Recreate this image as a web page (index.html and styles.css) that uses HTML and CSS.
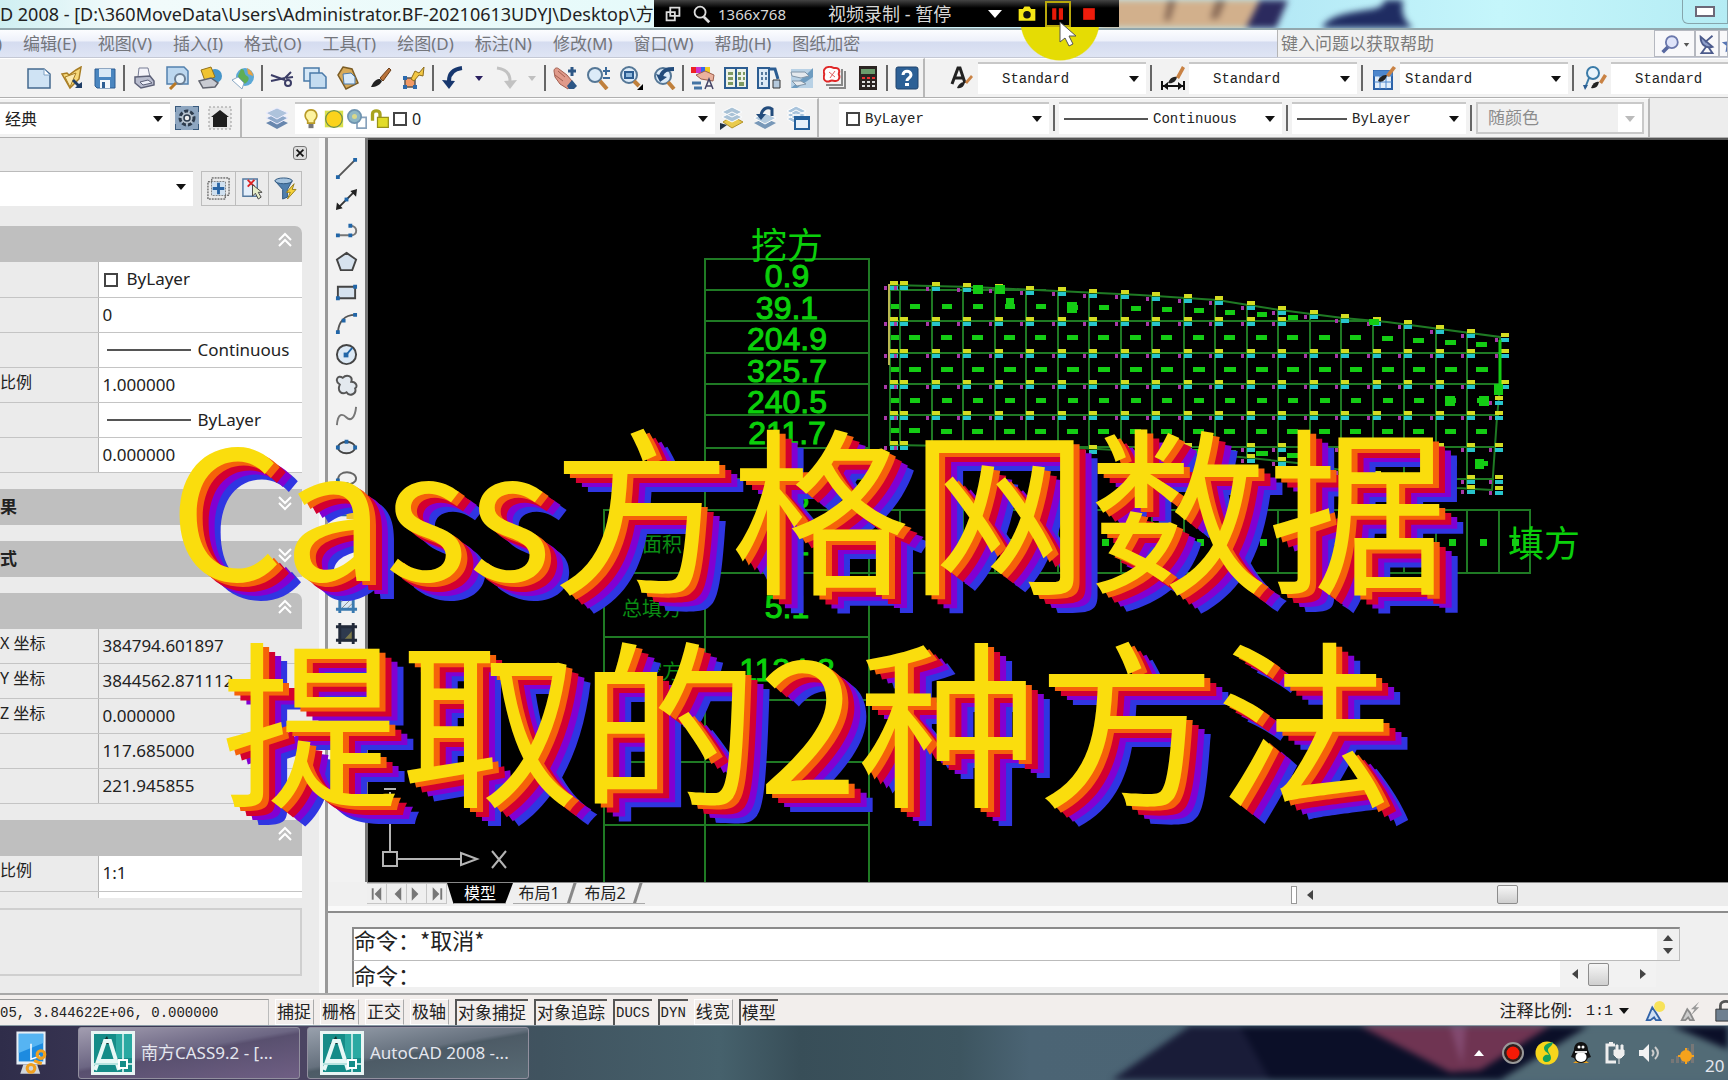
FILE: index.html
```html
<!DOCTYPE html>
<html lang="zh-CN">
<head>
    <meta charset="UTF-8">
    <meta name="viewport" content="width=device-width, initial-scale=1.0">
    <title>Cass方格网数据提取的2种方法</title>
    <link rel="stylesheet" href="styles.css">
</head>
<body>
    <header class="titlebar">
        <svg class="wall" viewBox="0 0 1728 30" preserveAspectRatio="none">
            <path d="M1100 0h160l-8 30h-152z" fill="#d2b08c"/>
            <path d="M1168 0h8l-6 22h-6zM1216 0h10l-8 20h-8z" fill="#8a6c58"/>
            <path d="M1260 0h28l-12 30h-30z" fill="#2b2a5e"/>
            <path d="M1322 30c6-14 30-17 50-20 10-2 12-6 13-10h18c-2 12 0 22 10 30z" fill="#1f2c62"/>
        </svg>
        <span class="title-text">D 2008 - [D:\360MoveData\Users\Administrator.BF-20210613UDYJ\Desktop\方格</span>
        <button class="minimize" aria-label="最小化"></button>
    </header>

    <!-- floating screen recorder -->
    <div class="recorder">
        <svg class="icon" viewBox="0 0 24 24" fill="none" stroke="#ddd" stroke-width="2"><path d="M9 5h10v9H9zM5 10h9v9H5z"/></svg>
        <svg class="icon" viewBox="0 0 24 24" fill="none" stroke="#ddd" stroke-width="2"><circle cx="11" cy="10" r="6"/><path d="M15 15l6 6" stroke-width="3"/></svg>
        <span class="rec-size">1366x768</span>
        <span class="rec-state">视频录制 - 暂停</span>
        <span class="rec-arrow"></span>
        <button class="rec-btn" aria-label="截图"><svg viewBox="0 0 24 24"><path d="M2 6h5l2-3h6l2 3h5v14H2z" fill="#f5e616"/><circle cx="12" cy="13" r="4.500" fill="#111"/></svg></button>
        <button class="rec-btn rec-pause" aria-label="暂停"><svg viewBox="0 0 24 24"><path d="M5 5h5v14H5zM13 5h5v14h-5z" fill="#e81a08"/></svg></button>
        <button class="rec-btn" aria-label="停止"><svg viewBox="0 0 24 24"><path d="M5 5h14v14H5z" fill="#ee1c0c"/></svg></button>
    </div>
    <div class="click-spot"></div>
    <svg class="cursor" viewBox="0 0 20 28"><path d="M2 2v20l5-4 4 8 4-2-4-8h7z" fill="#fff" stroke="#555" stroke-width="1"/></svg>

    <nav class="menubar">
        <a href="#">)</a>
        <a href="#">编辑(E)</a>
        <a href="#">视图(V)</a>
        <a href="#">插入(I)</a>
        <a href="#">格式(O)</a>
        <a href="#">工具(T)</a>
        <a href="#">绘图(D)</a>
        <a href="#">标注(N)</a>
        <a href="#">修改(M)</a>
        <a href="#">窗口(W)</a>
        <a href="#">帮助(H)</a>
        <a href="#">图纸加密</a>
        <div class="help">
            <input type="text" aria-label="帮助搜索" placeholder="键入问题以获取帮助">
            <button class="help-btn wide" aria-label="搜索"><svg viewBox="0 0 34 24"><path d="M4 21l6-6" stroke="#5868a0" stroke-width="4"/><circle cx="14" cy="10" r="6.500" fill="#dfe4fa" stroke="#6b78ac" stroke-width="2"/><path d="M27 11h6l-3 4z" fill="#555"/></svg></button>
            <button class="help-btn" aria-label="通讯中心"><svg viewBox="0 0 24 24"><path d="M5 4c0 9 6 13 13 11z" fill="#8fa0cc" stroke="#4c5b8c" stroke-width="2"/><path d="M10 10l8-7M11 15l-5 7h12l-4-6" fill="none" stroke="#4c5b8c" stroke-width="2"/></svg></button>
            <button class="help-btn last" aria-label="收藏"><svg viewBox="0 0 24 24"><path d="M12 3l3 6 7 1-5 4 1 7-6-3-6 3 1-7-5-4 7-1z" fill="#5876b4"/></svg></button>
        </div>
    </nav>

    <div class="toolbar">
        <div class="group standard">
            <button class="tool" aria-label="新建"><svg viewBox="0 0 24 24"><path d="M1 3h16l6 5v14H1z" fill="#cfe3f4" stroke="#44698f" stroke-width="1.500"/><path d="M17 3v6h6z" fill="#fff" stroke="#7fa2c4"/></svg></button>
            <button class="tool" aria-label="打开"><svg viewBox="0 0 24 24"><path d="M2 8l5-1 2 2 7-5 5-3-2 12-9 9z" fill="#f6d878" stroke="#a87d24" stroke-width="1.500"/><path d="M5 11l11-4-6 14z" fill="#fbeab0" stroke="#a87d24"/><path d="M22 22h-7l2-2-5-5 2-2 5 5 3-2z" fill="#1f3d66"/></svg></button>
            <button class="tool" aria-label="保存"><svg viewBox="0 0 24 24"><path d="M2 3h20v19H4l-2-2z" fill="#4a86c0" stroke="#2c5d92"/><path d="M6 3h12v8H6z" fill="#d8e8f6"/><path d="M7 14h10v8H7z" fill="#f2f6fa"/><path d="M9 16h3v6H9z" fill="#2c5d92"/></svg></button>
            <span class="sep"></span>
            <button class="tool" aria-label="打印"><svg viewBox="0 0 24 24"><path d="M7 2h9l2 9H6z" fill="#f4f4fa" stroke="#777c94"/><path d="M3 11l15-1 4 5v4l-13 3-6-5z" fill="#b9bdcf" stroke="#5d6178" stroke-width="1.500"/><path d="M8 16l8-2 4 3-9 2z" fill="#eef0fa" stroke="#5d6178"/></svg></button>
            <button class="tool" aria-label="打印预览"><svg viewBox="0 0 24 24"><path d="M2 1h17l4 4v13H2z" fill="#bcd7ef" stroke="#5381ae" stroke-width="1.500"/><circle cx="15" cy="13" r="5" fill="#e4f0fa" stroke="#6a7e94" stroke-width="2"/><path d="M11 17l-6 6" stroke="#b97824" stroke-width="3"/></svg></button>
            <button class="tool" aria-label="发布"><svg viewBox="0 0 24 24"><circle cx="17" cy="10" r="7" fill="#4695c8"/><path d="M3 4l10-3 4 10-10 4z" fill="#f0c330" stroke="#94721a"/><path d="M1 15l12-3 7 5-3 4-12 1z" fill="#c9cbd2" stroke="#60636e" stroke-width="1.500"/></svg></button>
            <button class="tool" aria-label="三维 DWF"><svg viewBox="0 0 24 24"><circle cx="14" cy="11" r="9" fill="#5ba8d6"/><path d="M10 3c5 0 2 5 6 7s0 8-4 8-4-4-5-8z" fill="#5fae55"/><path d="M16 2c4 2 6 5 6 8l-5-2z" fill="#e9a344"/><path d="M1 14l6-3 6 6-2 6z" fill="#fff" stroke="#8aa8c4"/></svg></button>
            <span class="sep"></span>
            <button class="tool" aria-label="剪切"><svg viewBox="0 0 24 24" fill="none" stroke="#3b3d66" stroke-width="2"><path d="M1 9l14 5M1 15l14-3"/><circle cx="18" cy="17" r="3"/><path d="M15 12l6-6M16 12l7-1"/></svg></button>
            <button class="tool" aria-label="复制"><svg viewBox="0 0 24 24"><path d="M1 2h15v13H1z" fill="#d6e8f7" stroke="#4a79a8" stroke-width="1.500"/><path d="M7 7h12l4 4v11H7z" fill="#c4dcf0" stroke="#4a79a8" stroke-width="1.500"/></svg></button>
            <button class="tool" aria-label="粘贴"><svg viewBox="0 0 24 24"><path d="M7 1l9 2 6 14-12 6-8-14z" fill="#d8aa58" stroke="#7c5d26" stroke-width="1.500"/><path d="M7 8l8-1 4 4v7H8z" fill="#d8eafa" stroke="#4a79a8"/></svg></button>
            <button class="tool" aria-label="特性匹配"><svg viewBox="0 0 24 24"><path d="M2 21c3-7 6-8 9-8l2 2c-2 4-6 6-11 6z" fill="#222"/><path d="M11 12l9-10 2 2-8 11z" fill="#b9733a" stroke="#6a3e1a"/></svg></button>
            <button class="tool" aria-label="块编辑器"><svg viewBox="0 0 24 24"><path d="M3 12h10v9H3z" fill="#f29a66" stroke="#555" stroke-width="1.500"/><path d="M1 10h4v4H1zM1 19h4v4H1zM11 19h4v4h-4z" fill="#2d6aad"/><path d="M9 13l4-8 4 2 5-6-1 9-4-1-5 6z" fill="#f2c744" stroke="#8d6c19"/></svg></button>
            <span class="sep"></span>
            <button class="tool" aria-label="放弃"><svg viewBox="0 0 24 24"><path d="M8 15C8 7 13 3 21 2" fill="none" stroke="#17376e" stroke-width="4"/><path d="M1 14l13 1-6 8z" fill="#17376e"/></svg></button>
            <button class="drop" aria-label="放弃列表"></button>
            <button class="tool" aria-label="重做"><svg viewBox="0 0 24 24"><path d="M16 15C16 7 11 3 3 2" fill="none" stroke="#c2c2c2" stroke-width="3"/><path d="M10 15l13-1-7 9z" fill="#c2c2c2"/></svg></button>
            <button class="drop off" aria-label="重做列表"></button>
            <span class="sep"></span>
            <button class="tool" aria-label="实时平移"><svg viewBox="0 0 24 24"><path d="M1 5c0-3 3-4 5-2l8 6 5 6-4 8-8-5-5-7z" fill="#e09a8a" stroke="#a35f50"/><path d="M5 5l7 6M2 9l8 6" stroke="#a35f50"/><path d="M19 1v9M15 5h8" stroke="#2c5685" stroke-width="3"/><path d="M14 20l5-6 5 6-3 3h-5z" fill="#2c5685"/></svg></button>
            <button class="tool" aria-label="实时缩放"><svg viewBox="0 0 24 24"><circle cx="9" cy="9" r="7" fill="#dcebf8" stroke="#557796" stroke-width="2"/><path d="M14 15l7 8" stroke="#c0803c" stroke-width="4"/><path d="M17 5h7M20 1v8M17 12h7" stroke="#3b6a9a" stroke-width="2"/></svg></button>
            <button class="tool" aria-label="窗口缩放"><svg viewBox="0 0 24 24"><circle cx="10" cy="9" r="8" fill="#dcebf8" stroke="#557796" stroke-width="2"/><path d="M6 6h8v6H6z" fill="#8fb8dc" stroke="#2c5d92" stroke-width="2"/><path d="M15 15l5 5" stroke="#c0803c" stroke-width="4"/><path d="M24 18v6h-6z" fill="#000"/></svg></button>
            <button class="tool" aria-label="缩放上一个"><svg viewBox="0 0 24 24"><circle cx="11" cy="10" r="8" fill="#dcebf8" stroke="#557796" stroke-width="2"/><path d="M16 16l6 7" stroke="#c0803c" stroke-width="4"/><path d="M9 10c2-6 6-7 13-7" fill="none" stroke="#234c7c" stroke-width="4"/><path d="M4 8l11 3-7 5z" fill="#234c7c"/></svg></button>
            <span class="sep"></span>
            <button class="tool" aria-label="特性"><svg viewBox="0 0 24 24"><path d="M0 1h5v6H0z" fill="#e22"/><path d="M5 1h5v6H5z" fill="#c3c"/><path d="M10 1h4v6h-4z" fill="#36e"/><path d="M14 1h5v6h-5z" fill="#ec2"/><path d="M5 9l9-4 9 4-1 6-12-2z" fill="#eab29e" stroke="#9b5f4d"/><path d="M1 17h9M3 22h8" stroke="#4474a4" stroke-width="3"/><path d="M14 23l4-10 4 10M15 20h6" fill="none" stroke="#446" stroke-width="1.500"/></svg></button>
            <button class="tool" aria-label="设计中心"><svg viewBox="0 0 24 24"><path d="M1 2h22v20H1z" fill="#eef3e8" stroke="#2c5d92" stroke-width="2"/><path d="M12 2v20" stroke="#2c5d92" stroke-width="2"/><path d="M4 6h5v3H4zM4 11h5v3H4zM4 16h5v3H4zM14 6h3v3h-3zM19 6h2v3h-2zM14 11h3v3h-3zM19 11h2v3h-2zM15 16h5v4h-5z" fill="#7f9a62"/></svg></button>
            <button class="tool" aria-label="工具选项板"><svg viewBox="0 0 24 24"><path d="M1 2h11v20H1z" fill="#dbe9f6" stroke="#2c5d92" stroke-width="2"/><path d="M4 6h2v3H4zM8 6h2v3H8zM4 11h2v3H4zM8 11h2v3H8zM4 16h2v3H4z" fill="#54789c"/><path d="M12 3h6l3 10" fill="none" stroke="#2c5d92" stroke-width="3"/><path d="M16 14h7v8h-7z" fill="#b5c9dc" stroke="#333"/></svg></button>
            <button class="tool" aria-label="图纸集"><svg viewBox="0 0 24 24"><path d="M1 3h22v19H1z" fill="#b8d1e5"/><path d="M23 2v9L7 22H1l14-12z" fill="#6e9cc0"/><path d="M1 6h14l4 4-8 2-9-2zM2 15h9l5 3-9 2z" fill="#e4e9ee" stroke="#8296a8"/></svg></button>
            <button class="tool" aria-label="标记集"><svg viewBox="0 0 24 24"><path d="M22 5v17H6M19 3v16H3" fill="none" stroke="#888" stroke-width="2"/><path d="M5 1c4-1 4 1 6 1s4-1 5 2-1 3 0 5 0 6-3 6-4-1-6 0-5 1-6-2 1-4 0-6 1-6 4-6z" fill="#fff" stroke="#e02828" stroke-width="2"/><path d="M6 6l6 5M12 5l-5 7" stroke="#e06060" stroke-width="1"/></svg></button>
            <button class="tool" aria-label="计算器"><svg viewBox="0 0 24 24"><path d="M3 0h18v24H3z" fill="#2b2422"/><path d="M5 3h14v5H5z" fill="#6b9d6d"/><path d="M6 11h3v2H6zM11 11h3v2h-3zM16 11h3v2h-3z" fill="#e33"/><path d="M6 15h3v2H6zM11 15h3v2h-3zM16 15h3v2h-3zM6 19h3v2H6zM11 19h3v2h-3zM16 19h3v2h-3z" fill="#ddd"/></svg></button>
            <span class="sep"></span>
            <button class="tool" aria-label="帮助"><svg viewBox="0 0 24 24"><rect x="1" y="1" width="22" height="22" rx="2" fill="#2c6096" stroke="#1e436c"/><path d="M8 9c0-5 8-5 8 0 0 3-4 3-4 6" fill="none" stroke="#fff" stroke-width="3"/><path d="M10 17h4v3h-4z" fill="#fff"/></svg></button>
        </div>
        <div class="group styles">
            <button class="tool" aria-label="文字样式"><svg viewBox="0 0 24 24"><path d="M2 18L8 2h2l5 15M5 12h8" fill="none" stroke="#222" stroke-width="3"/><path d="M7 22c2-5 5-6 8-6-1 5-4 7-8 6z" fill="#222"/><path d="M15 16l6-7 2 2-6 7z" fill="#c98244"/></svg></button>
            <span class="combo"><select class="mono indent" aria-label="文字样式"><option>Standard</option></select></span>
            <span class="sep"></span>
            <button class="tool" aria-label="标注样式"><svg viewBox="0 0 24 24"><path d="M1 15v9M23 15v9M2 20h20" stroke="#111" stroke-width="2"/><path d="M2 20l5-4v8zM22 20l-5-4v8z" fill="#111"/><path d="M7 17c2-5 5-7 9-6-1 5-5 7-9 6z" fill="#222"/><path d="M15 11l6-11 3 2-6 11z" fill="#c98244"/></svg></button>
            <span class="combo"><select class="mono indent" aria-label="标注样式"><option>Standard</option></select></span>
            <span class="sep"></span>
            <button class="tool" aria-label="表格样式"><svg viewBox="0 0 24 24"><path d="M2 5h18v18H2z" fill="#e2eefa" stroke="#2c62a8" stroke-width="2"/><path d="M2 5h18v5H2zM2 16h18M8 5v18M14 5v18" fill="#4d86cc" stroke="#4d86cc"/><path d="M6 15c2-5 5-6 9-6-1 5-5 8-9 6z" fill="#222"/><path d="M14 9l7-9 3 2-7 9z" fill="#c98244"/></svg></button>
            <span class="combo"><select class="mono" aria-label="表格样式"><option>Standard</option></select></span>
            <span class="sep"></span>
            <button class="tool" aria-label="多重引线样式"><svg viewBox="0 0 24 24"><circle cx="10" cy="7" r="6" fill="#eaf4fb" stroke="#3b7ba8" stroke-width="2"/><path d="M6 12l-4 10" stroke="#3b7ba8" stroke-width="2"/><path d="M0 19h5l-3 5z" fill="#2c5d92"/><path d="M8 22c2-5 5-7 8-6-1 5-4 7-8 6z" fill="#222"/><path d="M16 16l5-8 3 2-5 8z" fill="#c98244"/></svg></button>
            <span class="combo grow"><select class="mono indent" aria-label="多重引线样式"><option>Standard</option></select></span>
        </div>
    </div>

    <div class="toolbar">
        <div class="group workspace">
            <span class="combo"><select aria-label="工作空间"><option>经典</option></select></span>
            <button class="tool" aria-label="工作空间设置"><svg viewBox="0 0 24 24"><path d="M0 0h24v24H0z" fill="#8ea6c0"/><path d="M0 6V0h6M18 0h6v6M24 18v6h-6M6 24H0v-6" fill="none" stroke="#38597c" stroke-width="2"/><circle cx="12" cy="12" r="7" fill="#bac5d0" stroke="#2d3b4c" stroke-width="3" stroke-dasharray="4 2"/><circle cx="12" cy="12" r="3" fill="#eee" stroke="#2d3b4c" stroke-width="1.500"/></svg></button>
            <button class="tool" aria-label="我的工作空间"><svg viewBox="0 0 24 24"><path d="M1 1h22v22H1z" fill="#e8e8e8" stroke="#999" stroke-dasharray="2 2"/><path d="M12 4l9 7h-2v10H5V11H3z" fill="#1e1e1e"/></svg></button>
        </div>
        <div class="group layers">
            <button class="tool" aria-label="图层特性"><svg viewBox="0 0 24 24"><path d="M12 12l11 5-11 6-11-6z" fill="#6887ae"/><path d="M12 7l11 5-11 6-11-6z" fill="#8ea9ca" stroke="#eef"/><path d="M12 2l11 5-11 6L1 7z" fill="#aec3dc" stroke="#eef"/></svg></button>
            <span class="combo">
                <svg class="icon" viewBox="0 0 24 24"><path d="M8 14C2 8 6 1 12 1s10 7 4 13v3H8z" fill="#fdf3a0" stroke="#b99b28" stroke-width="2"/><path d="M9 18h6v5H9z" fill="#777"/></svg>
                <svg class="icon" viewBox="0 0 24 24"><path d="M1 2h22v20H1z" fill="#d9e04a"/><circle cx="12" cy="12" r="10" fill="#fbd31c" stroke="#6b8e4e" stroke-width="1.500"/></svg>
                <svg class="icon" viewBox="0 0 24 24"><path d="M12 10h11v13H12z" fill="#fff" stroke="#88a2bc" stroke-width="2"/><circle cx="9" cy="9" r="8" fill="#8eb6c4" stroke="#6f94b0" stroke-width="2"/><circle cx="9" cy="9" r="3" fill="#d9d88a"/></svg>
                <svg class="icon" viewBox="0 0 24 24"><path d="M3 14V6c0-5 9-5 9 0v4" fill="none" stroke="#a8a31e" stroke-width="4"/><path d="M9 10h13v12H9z" fill="#e2dc28" stroke="#98921a" stroke-width="1.500"/></svg>
                <span class="swatch"></span>
                <select aria-label="图层"><option>0</option></select>
            </span>
            <button class="tool" aria-label="置为当前"><svg viewBox="0 0 24 24"><path d="M12 10l11 6-11 6-9-6z" fill="#e9ca4c" stroke="#b3932a"/><path d="M12 6l10 5-10 5-10-5zM12 1l10 5-10 5L2 6z" fill="#a9c2d6" stroke="#fff"/><path d="M0 24v-7l7 2z" fill="#234"/></svg></button>
            <button class="tool" aria-label="上一个图层"><svg viewBox="0 0 24 24"><path d="M12 12l11 5-11 6-11-6z" fill="#7898b8"/><path d="M12 7l11 5-11 6L1 12z" fill="#b4cbdf" stroke="#fff"/><path d="M8 9c1-6 6-9 11-6v7" fill="none" stroke="#234c7c" stroke-width="3"/><path d="M3 8h10l-5 6z" fill="#234c7c"/></svg></button>
            <button class="tool" aria-label="图层状态"><svg viewBox="0 0 24 24"><path d="M10 8l10 5-10 5-9-5zM10 4l10 5-10 5-9-5zM10 0l10 5-10 5-9-5z" fill="#a9c4dc" stroke="#fff"/><path d="M9 11h14v12H9z" fill="#e6f1fb" stroke="#24609c" stroke-width="2"/><path d="M9 11h14v3H9z" fill="#24609c"/></svg></button>
        </div>
        <div class="group properties">
            <span class="combo color"><span class="swatch"></span><select class="mono" aria-label="颜色"><option>ByLayer</option></select></span>
            <span class="sep"></span>
            <span class="combo ltype"><span class="rule"></span><select class="mono" aria-label="线型"><option>Continuous</option></select></span>
            <span class="sep"></span>
            <span class="combo weight"><span class="rule"></span><select class="mono" aria-label="线宽"><option>ByLayer</option></select></span>
            <span class="sep"></span>
            <span class="combo disabled"><select aria-label="打印样式" disabled><option>随颜色</option></select></span>
        </div>
    </div>

    <main class="work">
        <aside class="palette">
            <button class="close" aria-label="关闭"><svg viewBox="0 0 14 14"><path d="M3 3l8 8M11 3l-8 8" stroke="#111" stroke-width="2"/></svg></button>
            <div class="picker">
                <span class="combo"><select aria-label="选择对象"><option></option></select></span>
                <div class="pick-btns">
                    <button aria-label="切换 PICKADD"><svg viewBox="0 0 24 24"><path d="M5 1h18v18H5zM1 5h18v18H1z" fill="none" stroke="#333" stroke-dasharray="2 1"/><path d="M5 5h14v14H5z" fill="#cfe0f0"/><path d="M12 6v12M6 12h12" stroke="#2a65a4" stroke-width="3"/></svg></button>
                    <button aria-label="选择对象"><svg viewBox="0 0 24 24"><path d="M2 2h15v18H2z" fill="#e3eefa" stroke="#557aa0" stroke-width="1.500"/><path d="M7 3l7 7M14 3l-7 7" stroke="#d22" stroke-width="2"/><path d="M12 8v12l3-3 3 6 3-2-3-5h4z" fill="#e4ecc8" stroke="#444"/></svg></button>
                    <button aria-label="快速选择"><svg viewBox="0 0 24 24"><path d="M1 4l8 9v10l5-2v-8l5-9z" fill="#4f7fae" stroke="#2f5880"/><ellipse cx="10" cy="4" rx="9" ry="3" fill="#a5c3de" stroke="#2f5880"/><path d="M21 7l-8 9h4l-3 7 9-10h-4z" fill="#f6d23a" stroke="#9b7f18"/></svg></button>
                </div>
            </div>

            <section>
                <h2><svg viewBox="0 0 14 16"><path d="M1 8l6-6 6 6M1 14l6-6 6 6"/></svg></h2>
                <table>
                    <tr><th></th><td><span class="swatch"></span>ByLayer</td></tr>
                    <tr><th></th><td>0</td></tr>
                    <tr><th></th><td><span class="rule"></span>Continuous</td></tr>
                    <tr><th>比例</th><td>1.000000</td></tr>
                    <tr><th></th><td><span class="rule"></span>ByLayer</td></tr>
                    <tr><th></th><td>0.000000</td></tr>
                </table>
            </section>
            <section>
                <h2 class="flat">果<svg viewBox="0 0 14 16"><path d="M1 2l6 6 6-6M1 8l6 6 6-6"/></svg></h2>
            </section>
            <section>
                <h2 class="flat">式<svg viewBox="0 0 14 16"><path d="M1 2l6 6 6-6M1 8l6 6 6-6"/></svg></h2>
            </section>
            <section>
                <h2><svg viewBox="0 0 14 16"><path d="M1 8l6-6 6 6M1 14l6-6 6 6"/></svg></h2>
                <table class="readonly">
                    <tr><th>X 坐标</th><td>384794.601897</td></tr>
                    <tr><th>Y 坐标</th><td>3844562.871112</td></tr>
                    <tr><th>Z 坐标</th><td>0.000000</td></tr>
                    <tr><th></th><td>117.685000</td></tr>
                    <tr><th></th><td>221.945855</td></tr>
                </table>
            </section>
            <section class="cut">
                <h2 class="flat"><svg viewBox="0 0 14 16"><path d="M1 8l6-6 6 6M1 14l6-6 6 6"/></svg></h2>
                <table>
                    <tr><th>比例</th><td>1:1</td></tr>
                    <tr><th></th><td></td></tr>
                </table>
            </section>
            <div class="hint"></div>
        </aside>

        <div class="stage">
            <div class="stage-top">
                <div class="drawbar">
                    <button aria-label="直线"><svg viewBox="0 0 24 24"><path d="M3 21L21 3" stroke="#555" stroke-width="2"/><path d="M1 19h4v4H1zM19 1h4v4h-4z" fill="#2166a8"/></svg></button>
                    <button aria-label="构造线"><svg viewBox="0 0 24 24"><path d="M3 21L21 3" stroke="#333" stroke-width="2"/><path d="M1 23l1-8 6 6zM23 1l-1 8-6-6z" fill="#222"/><path d="M10 10h4v4h-4z" fill="#2166a8"/></svg></button>
                    <button aria-label="多段线"><svg viewBox="0 0 24 24"><path d="M3 17h14c7 0 7-10-1-10" fill="none" stroke="#777" stroke-width="2"/><path d="M1 15h4v4H1zM14 15h4v4h-4zM14 5h4v4h-4z" fill="#2166a8"/></svg></button>
                    <button aria-label="正多边形"><svg viewBox="0 0 24 24"><path d="M12 3l10 7-4 11H6L2 10z" fill="#d6e2ee" stroke="#444" stroke-width="2"/></svg></button>
                    <button aria-label="矩形"><svg viewBox="0 0 24 24"><path d="M3 6h18v12H3z" fill="#d6e2ee" stroke="#444" stroke-width="2"/><path d="M1 16h4v4H1zM19 4h4v4h-4z" fill="#2166a8"/></svg></button>
                    <button aria-label="圆弧"><svg viewBox="0 0 24 24"><path d="M3 21C4 10 10 3 21 3" fill="none" stroke="#555" stroke-width="2"/><path d="M1 19h4v4H1zM7 7h4v4H7zM19 1h4v4h-4z" fill="#2166a8"/></svg></button>
                    <button aria-label="圆"><svg viewBox="0 0 24 24"><circle cx="12" cy="12" r="10" fill="#dce9f5" stroke="#444" stroke-width="2"/><path d="M12 12l6-7" stroke="#2166a8" stroke-width="2"/><path d="M9 10h5v5H9z" fill="#2166a8"/></svg></button>
                    <button aria-label="修订云线"><svg viewBox="0 0 24 24"><path d="M5 11C-1 7 3 0 8 4c4-4 11-2 9 4 5 0 7 5 4 7 2 6-6 9-9 4-5 3-10-1-7-8z" fill="#e3e9ef" stroke="#555" stroke-width="2"/></svg></button>
                    <button aria-label="样条曲线"><svg viewBox="0 0 24 24"><path d="M2 21C3 8 8 9 12 13s9 1 10-11" fill="none" stroke="#777" stroke-width="2"/></svg></button>
                    <button aria-label="椭圆"><svg viewBox="0 0 24 24"><ellipse cx="12" cy="12" rx="9" ry="6" fill="#e3e9ef" stroke="#444" stroke-width="2"/><path d="M1 10h4v4H1zM19 10h4v4h-4zM10 4h4v4h-4z" fill="#2166a8"/></svg></button>
                    <button aria-label="椭圆弧"><svg viewBox="0 0 24 24"><path d="M3 14C3 2 22 4 22 12c0 4-5 6-9 6" fill="none" stroke="#666" stroke-width="2"/><path d="M1 12h4v4H1zM10 16h4v4h-4z" fill="#2166a8"/></svg></button>
                    <button aria-label="插入块"><svg viewBox="0 0 24 24"><path d="M3 3h15v15H3z" fill="#d6e2ee" stroke="#2166a8" stroke-width="2"/><path d="M12 12h10v10H12z" fill="#f0c330"/></svg></button>
                    <button aria-label="创建块"><svg viewBox="0 0 24 24"><path d="M4 4h15v15H4z" fill="#d6e2ee" stroke="#2166a8" stroke-width="2"/></svg></button>
                    <button aria-label="点"><svg viewBox="0 0 24 24"><path d="M10 10h4v4h-4z" fill="#2166a8"/></svg></button>
                    <button aria-label="图案填充"><svg viewBox="0 0 24 24"><path d="M5 5h14v14H5z" fill="#dce9f5"/><path d="M6 12l6-6M7 18L18 7M13 18l5-5" stroke="#888"/><path d="M5 1v22M19 1v22M1 5h22M1 19h22" stroke="#3a7ab0" stroke-width="3"/></svg></button>
                    <button aria-label="渐变色"><svg viewBox="0 0 24 24"><path d="M4 4h16v16H4z" fill="#2e3a4e"/><path d="M20 7v13H8z" fill="#7d7a4a"/><path d="M5 1v22M19 1v22M1 5h22M1 19h22" stroke="#222a3a" stroke-width="3"/></svg></button>
                </div>

                <svg class="drawing" viewBox="368 140 1360 742" preserveAspectRatio="xMinYMin slice">
                    <!-- result table -->
                    <g class="lines">
                        <path d="M705 882V259H869V882M705 290H869M705 321H869M705 353H869M705 384H869M705 415H869M705 448H869M705 479H869"/>
                        <path d="M604 882V510H1530V573H604M604 637H869M604 700H869M604 762H869M604 825H869"/>
                    </g>
                    <g class="values">
                        <text x="787" y="287">0.9</text>
                        <text x="787" y="319">39.1</text>
                        <text x="787" y="350">204.9</text>
                        <text x="787" y="382">325.7</text>
                        <text x="787" y="413">240.5</text>
                        <text x="787" y="444">211.7</text>
                        <text x="787" y="508">0.3</text>
                        <text x="787" y="555">0.1</text>
                        <text x="787" y="618">5.1</text>
                        <text x="787" y="681">1134.3</text>
                    </g>
                    <g class="heads">
                        <text x="787" y="259">挖方</text>
                        <text x="1544" y="557">填方</text>
                    </g>
                    <g class="labels">
                        <text x="652" y="552">总面积</text>
                        <text x="652" y="616">总填方</text>
                        <text x="652" y="679">总挖方</text>
                    </g>
                    <g id="grid"></g>
                    <!-- UCS icon -->
                    <g class="ucs">
                        <path d="M383 852h14v14h-14zM390 852v-60M397 859h64M461 853v12l16-6zM384 789h12"/>
                        <path d="M492 851l14 17M506 851l-14 17"/>
                    </g>
                </svg>
            </div>

            <div class="tabs">
                <button class="nav" aria-label="首个"><svg viewBox="0 0 20 20"><path d="M6 4v12" stroke="#777" stroke-width="2"/><path d="M15 3v14l-7-7z"/></svg></button>
                <button class="nav" aria-label="上一个"><svg viewBox="0 0 20 20"><path d="M15 3v14l-7-7z"/></svg></button>
                <button class="nav" aria-label="下一个"><svg viewBox="0 0 20 20"><path d="M5 3v14l7-7z"/></svg></button>
                <button class="nav" aria-label="最后"><svg viewBox="0 0 20 20"><path d="M6 3v14l7-7z"/><path d="M15 4v12" stroke="#777" stroke-width="2"/></svg></button>
                <button class="tab active">模型</button>
                <button class="tab">布局1</button>
                <button class="tab">布局2</button>
                <div class="hscroll"><span class="grip"></span><span class="tri left"></span><span class="thumb"></span></div>
            </div>

            <div class="command">
                <div class="history"><p>命令：*取消*</p><div class="vscroll"><span class="tri up"></span><span class="tri down"></span></div></div>
                <div class="prompt">
                    <label for="cmd">命令：</label><input id="cmd" type="text">
                    <div class="pscroll"><span class="tri left"></span><span class="thumb"></span><span class="tri right"></span></div>
                </div>
            </div>
        </div>
    </main>

    <footer class="status">
        <span class="coords">05, 3.844622E+06, 0.000000</span>
        <button>捕捉</button>
        <button>栅格</button>
        <button>正交</button>
        <button>极轴</button>
        <button class="on">对象捕捉</button>
        <button class="on">对象追踪</button>
        <button class="on latin">DUCS</button>
        <button class="on latin">DYN</button>
        <button>线宽</button>
        <button class="on">模型</button>
        <div class="anno">
            <span>注释比例:</span>
            <button class="scale">1:1</button>
            <svg class="icon" viewBox="0 0 24 24"><path d="M3 22L9 8l4 6 5 8h-5l-2-3-4 3z" fill="#cfe0f4" stroke="#3263a8" stroke-width="2"/><circle cx="17" cy="7" r="6" fill="#f7e25a"/></svg>
            <svg class="icon" viewBox="0 0 24 24"><path d="M3 22L9 10l3 4 4 8h-4l-2-3-3 3z" fill="#ccc" stroke="#8b8b8b" stroke-width="2"/><path d="M22 2l-9 8h4l-4 7 9-9h-4z" fill="#999"/></svg>
            <svg class="icon lock" viewBox="0 0 24 24"><path d="M7 11V6c0-6 12-6 12 0v5" fill="none" stroke="#555" stroke-width="3"/><path d="M2 10h22v13H2z" fill="#6e7f90" stroke="#333"/></svg>
        </div>
    </footer>

    <div class="taskbar">
        <svg class="wall" viewBox="0 0 1728 55" preserveAspectRatio="none">
            <path d="M1190 0h538v55h-616z" fill="#0b0f28"/>
            <path d="M1190 0h50l30 55h-158z" fill="#191c38"/>
            <path d="M1360 0h190l-70 45-30 2z" fill="#6f3452"/>
            <path d="M1450 0h16l-4 40z" fill="#834a70"/>
            <path d="M1588 0h84l56 24v31h-228z" fill="#526b76"/>
        </svg>
        <svg class="launcher" viewBox="0 0 40 60"><path d="M1 2h38v43H1z" fill="#e6eef4"/><path d="M4 5h32v36H4z" fill="#1d8be0"/><path d="M4 5h32v12L4 30z" fill="#56b4f2"/><path d="M10 45h18l4 12H6z" fill="#d0d5da"/><path d="M20 18v20l12-4" stroke="#fff" stroke-width="2" fill="none"/><circle cx="20" cy="50" r="5" fill="none" stroke="#f0a020" stroke-width="4"/><circle cx="33" cy="32" r="5" fill="none" stroke="#f0a020" stroke-width="4"/><path d="M24 40l10 4" stroke="#f0a020" stroke-width="4"/></svg>
        <button class="task">
            <svg viewBox="0 0 44 44"><path d="M0 0h44v44H0z" fill="#e9f5f4"/><path d="M3 3h38v38H3z" fill="#158c88"/><path d="M25 3h16v24H25z" fill="#2aa9a2"/><path d="M10 13l6-8 3 8z" fill="#12302f"/><path d="M4 39L14 10h5l9 29M8 30h18" fill="none" stroke="#e8f8f6" stroke-width="4"/><path d="M32 3v38M3 33h38" stroke="#b8e4e0" stroke-width="2"/><path d="M28 29h8v8h-8z" fill="#158c88" stroke="#fff" stroke-width="2"/></svg>
            <span>南方CASS9.2 - [...</span>
        </button>
        <button class="task second">
            <svg viewBox="0 0 44 44"><path d="M0 0h44v44H0z" fill="#e9f5f4"/><path d="M3 3h38v38H3z" fill="#158c88"/><path d="M25 3h16v24H25z" fill="#2aa9a2"/><path d="M10 13l6-8 3 8z" fill="#12302f"/><path d="M4 39L14 10h5l9 29M8 30h18" fill="none" stroke="#e8f8f6" stroke-width="4"/><path d="M32 3v38M3 33h38" stroke="#b8e4e0" stroke-width="2"/><path d="M28 29h8v8h-8z" fill="#158c88" stroke="#fff" stroke-width="2"/></svg>
            <span>AutoCAD 2008 -...</span>
        </button>
        <div class="tray">
            <svg viewBox="0 0 24 24"><path d="M7 15l5-6 5 6z" fill="#fff"/></svg>
            <svg viewBox="0 0 24 24"><circle cx="12" cy="12" r="10" fill="#2d1f1f" stroke="#999" stroke-width="2"/><circle cx="12" cy="12" r="6.500" fill="#f41a06"/></svg>
            <svg viewBox="0 0 24 24"><circle cx="12" cy="12" r="11.500" fill="#f7d51c"/><path d="M18 1c-5 1-9 3-9 6 0 4 4 4 5 7-3-1-7 1-6 5 1 3 8 3 8-2 0-4-3-5-3-8 0-3 4-3 5-8z" fill="#15a05c"/></svg>
            <svg viewBox="0 0 24 24"><path d="M4 22l3-2h10l3 2z" fill="#e8a01c"/><path d="M12 1c5 0 7 4 7 8l3 7-3 1c-1 3-4 5-7 5s-6-2-7-5l-3-1 3-7c0-4 2-8 7-8z" fill="#111"/><ellipse cx="12" cy="16" rx="5.500" ry="5" fill="#fff"/><circle cx="10" cy="6" r="1.500" fill="#fff"/><circle cx="14" cy="6" r="1.500" fill="#fff"/><path d="M6 11h12" stroke="#ddd" stroke-width="2"/></svg>
            <svg viewBox="0 0 24 24"><path d="M12 4H4v17h9" fill="none" stroke="#eee" stroke-width="3"/><path d="M6 1h4v3H6z" fill="#eee"/><path d="M11 9h10v5l-3 3h-4l-3-3zM13 4h2v5h-2zM18 4h2v5h-2zM16 16v7" fill="#eee" stroke="#eee"/></svg>
            <svg viewBox="0 0 24 24"><path d="M2 9h4l6-6v18l-6-6H2z" fill="#f2f2f2"/><path d="M15 9c2 2 2 4 0 6M18 6c4 4 4 8 0 12" fill="none" stroke="#ccc" stroke-width="2"/></svg>
            <svg viewBox="0 0 24 24"><path d="M0 18h3v4H0zM5 15h3v7H5zM10 11h3v11h-3zM15 7h3v15h-3zM20 3h3v19h-3z" fill="#777"/><circle cx="15" cy="15" r="6" fill="#f5a21c"/><path d="M15 7v16M7 15h16" stroke="#f5a21c" stroke-width="2"/></svg>
            <span class="clock">20</span>
        </div>
    </div>

    <h1 class="caption">Cass方格网数据<br>提取的2种方法</h1>

    <script src="drawing.js"></script>
</body>
</html>
```
FILE: styles.css
```css
* {
    box-sizing: border-box;
}

body {
    margin: 0;
    height: 100vh;
    display: flex;
    flex-direction: column;
    position: relative;
    overflow: hidden;
    background: #f0f0f0;
    color: #222;
    font: 16px/20px "Noto Sans", "Noto Sans CJK SC", sans-serif;
}

button {
    margin: 0;
    padding: 0;
    border: 0;
    background: none;
    color: inherit;
    font: inherit;
    display: flex;
    align-items: center;
    justify-content: center;
}

select, input {
    margin: 0;
    padding: 0;
    border: 0;
    background: none;
    color: inherit;
    font: inherit;
    appearance: none;
    min-width: 0;
}

.icon {
    width: 22px;
    height: 22px;
    flex: none;
}

/* wallpaper seen through the glass bars */
.wall {
    position: absolute;
    left: 0;
    top: 0;
    width: 100%;
    height: 100%;
    filter: blur(3px);
}

/* title bar */
.titlebar {
    height: 30px;
    flex: none;
    position: relative;
    display: flex;
    justify-content: space-between;
    overflow: hidden;
    background: linear-gradient(90deg, #cfeff2 0, #f2fbfb 120px, #e6fafa 640px, #b5e9f6 1288px, #c5f6fb 1500px, #b5ecf4 1728px);
    border-bottom: 2px solid #92a7ad;
}

.title-text {
    position: relative;
    white-space: nowrap;
    font-size: 18px;
    line-height: 28px;
}

.minimize {
    position: relative;
    width: 46px;
    height: 24px;
    border: 1px solid #86a5ac;
    border-top: 0;
    border-radius: 0 0 0 6px;
}

.minimize::before {
    content: "";
    width: 16px;
    height: 7px;
    border: 2px solid #6c6878;
    background: #fff;
}

.recorder {
    position: absolute;
    left: 654px;
    top: 0;
    width: 465px;
    height: 27px;
    padding-left: 8px;
    display: flex;
    align-items: center;
    background: linear-gradient(#444, #000 8px);
    color: #d8d8d8;
    font-size: 18px;
    z-index: 2;
}

.recorder .icon {
    margin-right: 6px;
}

.rec-size {
    width: 110px;
    font-size: 15px;
}

.rec-state {
    width: 160px;
}

.rec-arrow {
    border: 7px solid transparent;
    border-top: 8px solid #fff;
    border-bottom: 0;
    margin-right: 12px;
}

.rec-btn {
    width: 26px;
    height: 26px;
    margin-right: 5px;
}

.rec-btn svg {
    width: 20px;
    height: 20px;
}

.rec-pause {
    border: 2px solid #b9a80c;
}

.click-spot {
    position: absolute;
    left: 1020px;
    top: 27px;
    width: 80px;
    height: 34px;
    background: radial-gradient(circle 40px at 40px -6px, #e5dc04 97%, transparent);
    z-index: 1;
}

.cursor {
    position: absolute;
    left: 1058px;
    top: 20px;
    width: 20px;
    height: 28px;
    z-index: 3;
}

/* menu */
.menubar {
    height: 28px;
    flex: none;
    display: flex;
    align-items: center;
    gap: 21px;
    background: linear-gradient(#fcfdff, #eef1fa 40%, #d5dcf0 45%, #dfe5f4);
    border-bottom: 1px solid #c4c8d4;
    font-size: 17px;
}

.menubar a {
    color: #74767c;
    text-decoration: none;
    white-space: nowrap;
}

.menubar a:first-child {
    width: 2px;
    display: flex;
    justify-content: flex-end;
}

.help {
    margin-left: auto;
    width: 451px;
    height: 27px;
    display: flex;
    background: #f1f1f1;
    border-left: 1px solid #b5b5b5;
}

.help input {
    flex: 1;
    padding-left: 3px;
}

.help input::placeholder {
    color: #7b7b7b;
    opacity: 1;
}

.help-btn {
    width: 24px;
    border: 1px solid #b5b8c0;
    background: #f8f8fa;
    overflow: hidden;
}

.help-btn.wide {
    width: 41px;
}

.help-btn.last {
    width: 9px;
    justify-content: flex-start;
}

.help-btn svg {
    height: 22px;
    flex: none;
}

/* toolbars */
.toolbar {
    height: 40px;
    flex: none;
    display: flex;
    background: #ededed;
    border-bottom: 1px solid #b0b0b0;
}

.group {
    display: flex;
    align-items: center;
    background: #f2f2f2;
    border-right: 2px solid #b8b8b8;
    border-top: 1px solid #fff;
}

.group.styles {
    border-right: 0;
}

.standard {
    padding-left: 22px;
    width: 927px;
}

.styles {
    flex: 1;
    padding-left: 20px;
}

.tool {
    width: 33px;
    height: 36px;
    flex: none;
}

.tool svg {
    width: 24px;
    height: 24px;
}

.sep {
    width: 2px;
    height: 26px;
    margin: 0 2px;
    flex: none;
    background: #666;
}

.styles .sep, .properties .sep {
    margin: 0 4px;
}

.drop {
    width: 20px;
    height: 36px;
}

.drop::after {
    content: "";
    border: 4px solid transparent;
    border-top: 5px solid #2a2060;
    border-bottom: 0;
}

.drop.off::after {
    border-top-color: #c0c0c0;
}

.combo {
    position: relative;
    display: flex;
    align-items: center;
    height: 32px;
    background: #fff;
    border-top: 2px solid #c8c8c8;
}

.combo::after {
    content: "";
    position: absolute;
    right: 7px;
    top: 12px;
    border: 5px solid transparent;
    border-top: 6px solid #111;
    border-bottom: 0;
    pointer-events: none;
}

.combo select {
    flex: 1;
    height: 28px;
    padding-left: 5px;
}

.combo .icon {
    width: 20px;
    height: 22px;
    margin-right: 3px;
}

.mono {
    font-family: "Liberation Mono", monospace;
    font-size: 14px;
}

.combo .indent {
    padding-left: 24px;
}

.styles .combo {
    width: 168px;
}

.styles .grow {
    flex: 1;
}

.styles .grow::after {
    content: none;
}

.swatch {
    width: 14px;
    height: 14px;
    flex: none;
    border: 2px solid #444;
    display: inline-block;
}

.rule {
    height: 2px;
    flex: none;
    background: #555;
    display: inline-block;
}

.workspace {
    width: 242px;
}

.workspace .combo {
    width: 170px;
}

.layers {
    width: 577px;
    padding: 0 3px 0 17px;
}

.layers .combo {
    flex: 1;
    padding-left: 6px;
}

.layers .tool:first-child {
    width: 36px;
}

.properties {
    padding: 0 4px 0 20px;
}

.color {
    width: 210px;
    padding-left: 7px;
}

.ltype {
    width: 223px;
    padding-left: 5px;
}

.ltype .rule {
    width: 84px;
}

.weight {
    width: 174px;
    padding-left: 5px;
}

.weight .rule {
    width: 50px;
}

.disabled {
    width: 168px;
    border: 2px solid #c9c9c9;
    background: linear-gradient(90deg, #f0f0f0 140px, #fff 140px);
}

.disabled::after {
    border-top-color: #bbb;
}

.disabled select {
    padding-left: 10px;
    color: #8c8c8c;
    opacity: 1;
    font-size: 17px;
}

/* properties palette */
.work {
    flex: 1;
    min-height: 0;
    display: flex;
}

.palette {
    width: 328px;
    flex: none;
    display: flex;
    flex-direction: column;
    background: #ebebeb;
    border-right: 3px solid #999;
    box-shadow: inset -6px 0 #f7f7f7;
    padding: 8px 23px 0 0;
}

.close {
    width: 14px;
    height: 14px;
    margin-right: -5px;
    align-self: flex-end;
    border: 1px solid #777;
    border-radius: 3px;
    background: #ddd;
}

.picker {
    display: flex;
    justify-content: space-between;
    margin: 11px 0 20px;
    height: 35px;
}

.picker .combo {
    width: 193px;
    height: 35px;
    border-top: 1px solid #bbb;
}

.pick-btns {
    display: flex;
    border: 1px solid #bdbdbd;
}

.pick-btns button {
    width: 33px;
}

.pick-btns button + button {
    border-left: 1px solid #bdbdbd;
}

.pick-btns svg {
    width: 23px;
    height: 23px;
}

.palette section {
    margin-bottom: 16px;
}

.palette h2 {
    margin: 0;
    height: 36px;
    display: flex;
    align-items: center;
    background: #bfbfbf;
    border-radius: 0 7px 0 0;
    font-size: 17px;
    line-height: 20px;
}

.palette h2.flat {
    border-radius: 0;
}

.palette h2 svg {
    width: 14px;
    height: 16px;
    margin: -8px 10px 0 auto;
    fill: none;
    stroke: #fff;
    stroke-width: 2;
}

.palette table {
    width: 100%;
    border-collapse: collapse;
    table-layout: fixed;
}

.palette tr {
    height: 35px;
}

.palette th, .palette td {
    padding: 0;
    border-bottom: 1px solid #c4c4c4;
    text-align: left;
    font-weight: 400;
    white-space: nowrap;
}

.palette th {
    width: 98px;
    padding-bottom: 6px;
    border-right: 1px solid #b5b5b5;
}

.palette td {
    padding-left: 4px;
    background: #fff;
    font-size: 17px;
}

.palette .readonly td {
    background: #ebebeb;
}

.palette td .swatch {
    margin: 0 9px 0 1px;
    vertical-align: -2px;
}

.palette td .rule {
    width: 84px;
    margin: 0 7px 0 4px;
    vertical-align: 5px;
}

.palette .cut {
    height: 78px;
    margin-bottom: 10px;
    overflow: hidden;
    flex: none;
}

.hint {
    height: 68px;
    border: 2px solid #cfcfcf;
    border-left: 0;
}

/* drawing area */
.stage {
    flex: 1;
    min-width: 0;
    display: flex;
    flex-direction: column;
}

.stage-top {
    flex: 1;
    min-height: 0;
    display: flex;
}

.drawbar {
    width: 40px;
    flex: none;
    padding-top: 15px;
    background: #f2f2f2;
    border-right: 3px solid #777;
}

.drawbar button {
    width: 36px;
    height: 31px;
}

.drawbar svg {
    width: 23px;
    height: 23px;
}

.drawing {
    flex: 1;
    min-width: 0;
    height: 100%;
    background: #000;
    border-top: 2px solid #555;
}

.lines {
    fill: none;
    stroke: #1f7a24;
    stroke-width: 2;
}

.drawing text {
    fill: #0bd00b;
    text-anchor: middle;
}

.values {
    font: 32px "Liberation Sans", sans-serif;
    stroke: #0bd00b;
    stroke-width: 1;
}

.heads {
    font: 36px "Noto Sans CJK SC", sans-serif;
}

.labels {
    font: 20px "Noto Sans CJK SC", sans-serif;
}

.drawing .labels text {
    fill: #0a8c14;
}

.ucs {
    fill: none;
    stroke: #b4b4b4;
    stroke-width: 2;
}

.mark-y { fill: #d3dc22; }
.mark-c { fill: #28c4cc; }
.mark-m { fill: #a838a8; }
.mark-g { fill: #14cc14; }

.tabs {
    height: 24px;
    margin-left: 39px;
    flex: none;
    display: flex;
    background: #efefef;
    border-top: 1px solid #888;
}

.nav {
    width: 20px;
    height: 21px;
    border: 1px solid #c6c6c6;
    border-left: 0;
}

.nav svg {
    width: 20px;
    height: 20px;
    fill: #777;
}

.tab {
    width: 66px;
    height: 21px;
    padding-right: 14px;
    background: linear-gradient(108deg, transparent 57px, #888 58px, #888 60px, transparent 61px);
    border-bottom: 1px solid #aaa;
}

.tab.active {
    padding: 0;
    background: #000;
    color: #fff;
    clip-path: polygon(0 0, 100% 0, 88% 100%, 10% 100%);
}

.hscroll {
    width: 437px;
    margin-left: auto;
    display: flex;
    align-items: center;
    background: #ececec;
}

.grip {
    width: 6px;
    height: 18px;
    margin-right: 10px;
    border: 1px solid #999;
    background: #fff;
}

.tri {
    border: 5px solid transparent;
}

.tri.left {
    border-right: 6px solid #444;
    border-left: 0;
}

.tri.right {
    border-left: 6px solid #444;
    border-right: 0;
}

.tri.up {
    border-bottom: 6px solid #444;
    border-top: 0;
}

.tri.down {
    border-top: 6px solid #444;
    border-bottom: 0;
}

.thumb {
    width: 21px;
    height: 19px;
    border: 1px solid #8d8d8d;
    border-radius: 2px;
    background: linear-gradient(#f6f6f6, #cfcfcf);
}

.hscroll .thumb {
    margin-left: 184px;
}

.command {
    height: 87px;
    flex: none;
    padding: 21px 48px 0 24px;
    background: #f0f0f0;
    box-shadow: inset 0 5px #fafafa, inset 0 7px #8c8c8c;
    font: 22px/20px "Noto Sans CJK SC", sans-serif;
}

.history {
    height: 34px;
    display: flex;
    justify-content: space-between;
    background: #fff;
    border: 2px solid #8a8a8a;
    border-right: 1px solid #bbb;
    border-bottom: 1px solid #bbb;
}

.history p {
    margin: 0;
}

.vscroll {
    width: 22px;
    display: flex;
    flex-direction: column;
    align-items: center;
    justify-content: space-evenly;
    background: #f0f0f0;
}

.prompt {
    height: 26px;
    margin-right: 24px;
    display: flex;
    align-items: center;
    background: #fff;
    border-left: 2px solid #8a8a8a;
}

.prompt input {
    flex: 1;
}

.pscroll {
    width: 96px;
    height: 26px;
    display: flex;
    align-items: center;
    justify-content: space-between;
    padding: 0 10px 0 12px;
    background: #f2f2f2;
}

.pscroll .thumb {
    height: 23px;
    margin-right: 22px;
}

/* status bar */
.status {
    height: 32px;
    flex: none;
    display: flex;
    align-items: flex-end;
    gap: 6px;
    background: #f2eeec;
    border-top: 2px solid #a8a8a8;
    font-size: 17px;
    overflow: hidden;
}

.coords {
    width: 269px;
    height: 26px;
    font: 14px/26px "Liberation Mono", monospace;
    border-top: 1px solid #999;
    border-right: 1px solid #bbb;
    white-space: nowrap;
}

.status button {
    height: 26px;
    padding: 0 2px 0 1px;
    border: 1px solid #fff;
    border-right-color: #aaa;
    white-space: nowrap;
}

.status .on {
    border: 2px solid #555;
    border-right: 0;
    border-bottom: 0;
}

.status .latin {
    font: 14px "Liberation Mono", monospace;
}

.anno {
    height: 28px;
    margin-left: auto;
    display: flex;
    align-items: center;
    gap: 13px;
}

.status .scale {
    border: 0;
    font: 15px "Liberation Mono", monospace;
    gap: 6px;
}

.anno .scale::after {
    content: "";
    border: 5px solid transparent;
    border-top: 6px solid #111;
    border-bottom: 0;
}

.anno .lock {
    margin-right: -8px;
}

/* taskbar */
.taskbar {
    height: 55px;
    flex: none;
    position: relative;
    display: flex;
    align-items: center;
    gap: 7px;
    overflow: hidden;
    color: #e4e6ee;
    font-size: 17px;
    background: linear-gradient(90deg, #2f2d4a 0, #4b4462 300px, #40535f 540px, #46616c 720px, #384e58 800px, #3d5560 960px, #4b6474 1030px, #4e6676 1728px);
    border-top: 1px solid #8a9aa4;
}

.launcher {
    position: relative;
    width: 40px;
    height: 46px;
    margin: 0 20px 0 11px;
}

.task {
    position: relative;
    width: 222px;
    height: 52px;
    padding: 0 12px;
    justify-content: flex-start;
    gap: 6px;
    border: 1px solid #92909f;
    border-radius: 3px;
    background: linear-gradient(170deg, #a29db0, #6c6683 45%, #59506f 50%, #6f5f84);
    white-space: nowrap;
}

.task.second {
    background: linear-gradient(170deg, #98a0ac, #66717e 45%, #4d5b66 50%, #586a74);
}

.task svg {
    width: 44px;
    height: 44px;
    flex: none;
}

.tray {
    position: relative;
    margin-left: auto;
    display: flex;
    align-items: center;
    gap: 10px;
}

.tray svg {
    width: 24px;
    height: 24px;
}

.clock {
    width: 23px;
    padding-top: 26px;
}

/* video caption over everything */
.caption {
    position: absolute;
    left: 0;
    right: 112px;
    top: 397px;
    margin: 0;
    z-index: 5;
    text-align: center;
    color: #fadd0d;
    font: 400 179px/213px "Noto Sans CJK SC", sans-serif;
    text-shadow: 6px 4px #f5620a, 12px 9px #d3002f, 18px 13px #8200d2, 24px 18px #3035e2;
    pointer-events: none;
}
```
FILE: drawing.js
```javascript
// square grid of the earthwork drawing
const grid = document.getElementById('grid');

const topEdge = [[890, 285], [973, 287], [1140, 295], [1217, 300], [1280, 310], [1343, 318], [1387, 322], [1500, 337]];
const bottomEdge = [[890, 445], [1080, 448], [1116, 450], [1240, 457], [1297, 463], [1457, 488], [1492, 490]];
const rightEdge = [[1500, 337], [1500, 387], [1497, 417], [1492, 490]];

const rows = [290, 321, 353, 384, 415, 447, 479];
const cols = [890];
for (let i = 0; i < 19; i++) {
    cols.push(Math.round(900 + i * 31.5));
}

function edgeY(edge, x) {
    for (let i = 1; i < edge.length; i++) {
        const [x1, y1] = edge[i - 1];
        const [x2, y2] = edge[i];
        if (x <= x2) return Math.round(y1 + (y2 - y1) * (x - x1) / (x2 - x1));
    }
    return edge[edge.length - 1][1];
}

function add(tag, attrs) {
    const el = document.createElementNS('http://www.w3.org/2000/svg', tag);
    for (const key in attrs) el.setAttribute(key, attrs[key]);
    grid.appendChild(el);
}

function box(cls, x, y, width, height) {
    add('rect', { class: cls, x, y, width, height });
}

function marks(x, y) {
    box('mark-y', x, y - 4, 8, 4);
    box('mark-c', x, y + 1, 8, 4);
    box('mark-m', x - 6, y + 1, 3, 4);
}

// outline
const outline = topEdge.concat(rightEdge.slice(1), bottomEdge.slice().reverse());
add('polygon', { class: 'lines', points: outline.join(' ') });

// lines
let d = '';
cols.forEach(x => { d += `M${x} ${edgeY(topEdge, x)}V${edgeY(bottomEdge, x)}`; });
rows.forEach(y => {
    let from = 890;
    let to = y > 415 ? 1494 : 1499;
    while (y > edgeY(bottomEdge, from)) from++;
    while (y < edgeY(topEdge, to)) to--;
    d += `M${from} ${y}H${to}`;
});
add('path', { class: 'lines', d });
add('path', { d: 'M889 284V365', stroke: '#b8b850', 'stroke-width': 2 });

// height marks on every node
cols.forEach(x => {
    const t = edgeY(topEdge, x);
    const b = edgeY(bottomEdge, x);
    marks(x, t);
    rows.forEach(y => {
        if (y > t + 8 && y < b - 6) marks(x, y);
    });
    marks(x, b);
});
[337, 353, 384, 400, 415, 447, 479, 490].forEach(y => marks(y < 400 ? 1501 : 1495, y));

// cell volumes
cols.forEach((x, c) => {
    const cx = c === 0 ? x + 5 : x + 15;
    for (let r = 0; r < rows.length - 1; r++) {
        const t = Math.max(rows[r], edgeY(topEdge, cx));
        const b = Math.min(rows[r + 1], edgeY(bottomEdge, cx));
        if (b - t < 8 || cx > 1490) continue;
        const w = c === 0 ? 8 : 10 + (c * 3 + r) % 3;
        box('mark-g', cx - Math.round(w / 2), Math.round((t + b) / 2) - 2, w, 5);
    }
});
box('mark-g', 973, 285, 10, 9);
box('mark-g', 995, 285, 10, 9);
box('mark-g', 1006, 298, 8, 11);
box('mark-g', 1067, 302, 10, 11);
box('mark-g', 1445, 396, 10, 10);
box('mark-g', 1479, 396, 10, 10);
box('mark-g', 1475, 459, 9, 10);
box('mark-g', 1369, 319, 10, 6);
box('mark-g', 1494, 384, 9, 11);
add('path', { d: 'M1500 340V386', stroke: '#14cc14', 'stroke-width': 3 });

// fill row under the grid
d = '';
for (let x = 900; x < 1520; x += 31.5) {
    d += `M${Math.round(x)} 510V573`;
    box('mark-g', Math.round(x) + 13, 539, 7, 7);
}
add('path', { class: 'lines', d });
```
